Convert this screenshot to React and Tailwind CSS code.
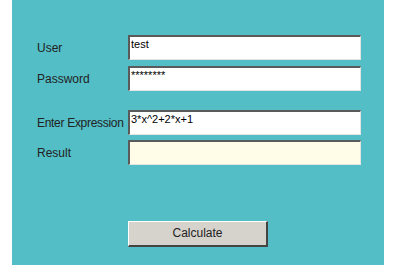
import React from 'react'

const font = { fontFamily: '"Liberation Sans", Arial, sans-serif' }

function Field({ label, value, bg = 'bg-white', className = '', labelClass = '' }) {
  return (
    <div className={`flex items-center ${className}`}>
      <div className={`w-[91px] shrink-0 whitespace-nowrap text-[12px] text-[#222] leading-[14px] ${labelClass}`}>{label}</div>
      <div
        className={`w-[233px] h-[25px] shrink-0 ${bg} border-t-2 border-l-2 border-b border-r border-t-[#5a5a5a] border-l-[#5a5a5a] border-b-[#e4e4e4] border-r-[#e4e4e4] pl-[1px] pt-[1px] text-[11px] leading-[13px] text-black`}
      >
        {value}
      </div>
    </div>
  )
}

export default function App() {
  return (
    <div className="w-[408px] h-[275px] bg-white" style={font}>
      <div className="ml-[12px] w-[372px] h-[265px] bg-[#53bec6] pl-[25px] pt-[35px] flex flex-col">
        <Field label="User" value="test" />
        <Field label="Password" value="********" className="mt-[6px]" />
        <Field label="Enter Expression" value="3*x^2+2*x+1" className="mt-[19px]" labelClass="tracking-[-0.3px]" />
        <Field label="Result" value="" bg="bg-[#fffde8]" className="mt-[5px]" />
        <div className="mt-[55px] ml-[91px]">
          <button className="w-[140px] h-[26px] bg-[#d6d2cc] border-t border-l border-b-2 border-r-2 border-t-white border-l-white border-b-[#444] border-r-[#444] text-[12px] text-[#222] leading-[14px]">
            Calculate
          </button>
        </div>
      </div>
    </div>
  )
}
